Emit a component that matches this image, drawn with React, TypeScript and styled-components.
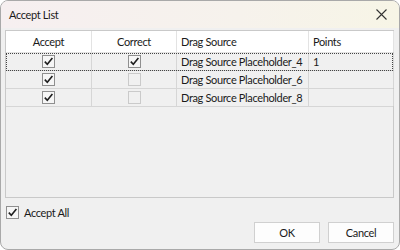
import React from 'react';
import styled, { createGlobalStyle } from 'styled-components';

const GlobalStyle = createGlobalStyle`
    html, body {
        margin: 0;
        padding: 0;
        background: #ffffff;
    }
    body {
        font-family: Lato, 'Noto Sans', sans-serif;
        font-size: 11px;
        letter-spacing: -0.35px;
        color: #1a1a1a;
    }
`;

const Window = styled.div`
    width: 400px;
    height: 250px;
    box-sizing: border-box;
    border: 1px solid #a9a9a9;
    border-radius: 8px;
    overflow: hidden;
    display: flex;
    flex-direction: column;
    background: #f0f0f0;
`;

const TitleBar = styled.div`
    height: 27px;
    flex: none;
    display: flex;
    align-items: center;
    justify-content: space-between;
    padding: 0 8px 0 8px;
    background: linear-gradient(90deg, #f6eff0 0%, #f6f2ec 60%, #f7f5e6 100%);
`;

const Title = styled.span`
    color: #1a1a1a;
`;

const CloseButton = styled.div`
    width: 14px;
    height: 14px;
    display: flex;
    align-items: center;
    justify-content: center;
    margin-right: 3px;
`;

const Body = styled.div`
    flex: 1;
    display: flex;
    flex-direction: column;
    padding: 2px 5px 6px 4px;
`;

const Grid = styled.div`
    height: 168px;
    box-sizing: border-box;
    border: 1px solid #c9c9c9;
    background: #f0f0f0;
    display: flex;
    flex-direction: column;
`;

const Row = styled.div<{ header?: boolean; focused?: boolean }>`
    display: grid;
    grid-template-columns: 86px 85px 132px 85px;
    height: ${(p) => (p.header ? '21px' : '17px')};
    background: ${(p) => (p.header ? '#ffffff' : '#f0f0f0')};
    border-bottom: 1px solid ${(p) => (p.header ? '#e3e3e3' : '#d6d6d6')};
    outline: ${(p) => (p.focused ? '1px dotted #444' : 'none')};
    outline-offset: -1px;
`;

const Cell = styled.div<{ center?: boolean; header?: boolean }>`
    display: flex;
    align-items: center;
    justify-content: ${(p) => (p.center ? 'center' : 'flex-start')};
    padding-left: ${(p) => (p.center ? '0' : '4px')};
    border-right: 1px solid ${(p) => (p.header ? '#e3e3e3' : '#d6d6d6')};
    white-space: nowrap;
    overflow: hidden;
    color: #1a1a1a;
`;

const Box = styled.div<{ dim?: boolean }>`
    width: 13px;
    height: 13px;
    box-sizing: border-box;
    border: 1px solid ${(p) => (p.dim ? '#cacaca' : '#8f8f8f')};
    background: ${(p) => (p.dim ? '#f0f0f0' : '#f6f6f6')};
    display: flex;
    align-items: center;
    justify-content: center;
`;

const Footer = styled.div`
    display: flex;
    flex-direction: column;
    flex: 1;
`;

const AcceptAll = styled.label`
    display: flex;
    align-items: center;
    gap: 5px;
    margin-top: 8px;
    margin-left: 1px;
`;

const Buttons = styled.div`
    margin-top: auto;
    display: flex;
    justify-content: flex-end;
    gap: 8px;
`;

const Button = styled.button`
    width: 66px;
    height: 21px;
    box-sizing: border-box;
    border: 1px solid #d0d0d0;
    background: #fdfdfd;
    font-family: inherit;
    font-size: inherit;
    letter-spacing: inherit;
    color: #1a1a1a;
    padding: 0;
`;

const Check = () => (
    <svg width="11" height="11" viewBox="0 0 11 11">
        <path d="M1.8 5.6 L4.3 8.3 L9.4 2" fill="none" stroke="#1f1f1f" strokeWidth="1.6" />
    </svg>
);

function CheckBox({ checked, dim }: { checked?: boolean; dim?: boolean }) {
    return <Box dim={dim}>{checked && <Check />}</Box>;
}

const rows = [
    { accept: true, correct: true, source: 'Drag Source Placeholder_4', points: '1' },
    { accept: true, correct: false, source: 'Drag Source Placeholder_6', points: '' },
    { accept: true, correct: false, source: 'Drag Source Placeholder_8', points: '' },
];

export default function App() {
    return (
        <>
            <GlobalStyle />
            <Window>
                <TitleBar>
                    <Title>Accept List</Title>
                    <CloseButton>
                        <svg width="11" height="11" viewBox="0 0 11 11">
                            <path d="M0.5 0.5 L10.5 10.5 M10.5 0.5 L0.5 10.5" stroke="#333" strokeWidth="1.1" />
                        </svg>
                    </CloseButton>
                </TitleBar>
                <Body>
                    <Grid>
                        <Row header>
                            <Cell header center>Accept</Cell>
                            <Cell header center>Correct</Cell>
                            <Cell header>Drag Source</Cell>
                            <Cell header>Points</Cell>
                        </Row>
                        {rows.map((row, i) => (
                            <Row key={row.source} focused={i === 0}>
                                <Cell center>
                                    <CheckBox checked={row.accept} />
                                </Cell>
                                <Cell center>
                                    <CheckBox checked={row.correct} dim={!row.correct} />
                                </Cell>
                                <Cell>{row.source}</Cell>
                                <Cell>{row.points}</Cell>
                            </Row>
                        ))}
                    </Grid>
                    <Footer>
                        <AcceptAll>
                            <CheckBox checked />
                            Accept All
                        </AcceptAll>
                        <Buttons>
                            <Button>OK</Button>
                            <Button>Cancel</Button>
                        </Buttons>
                    </Footer>
                </Body>
            </Window>
        </>
    );
}
